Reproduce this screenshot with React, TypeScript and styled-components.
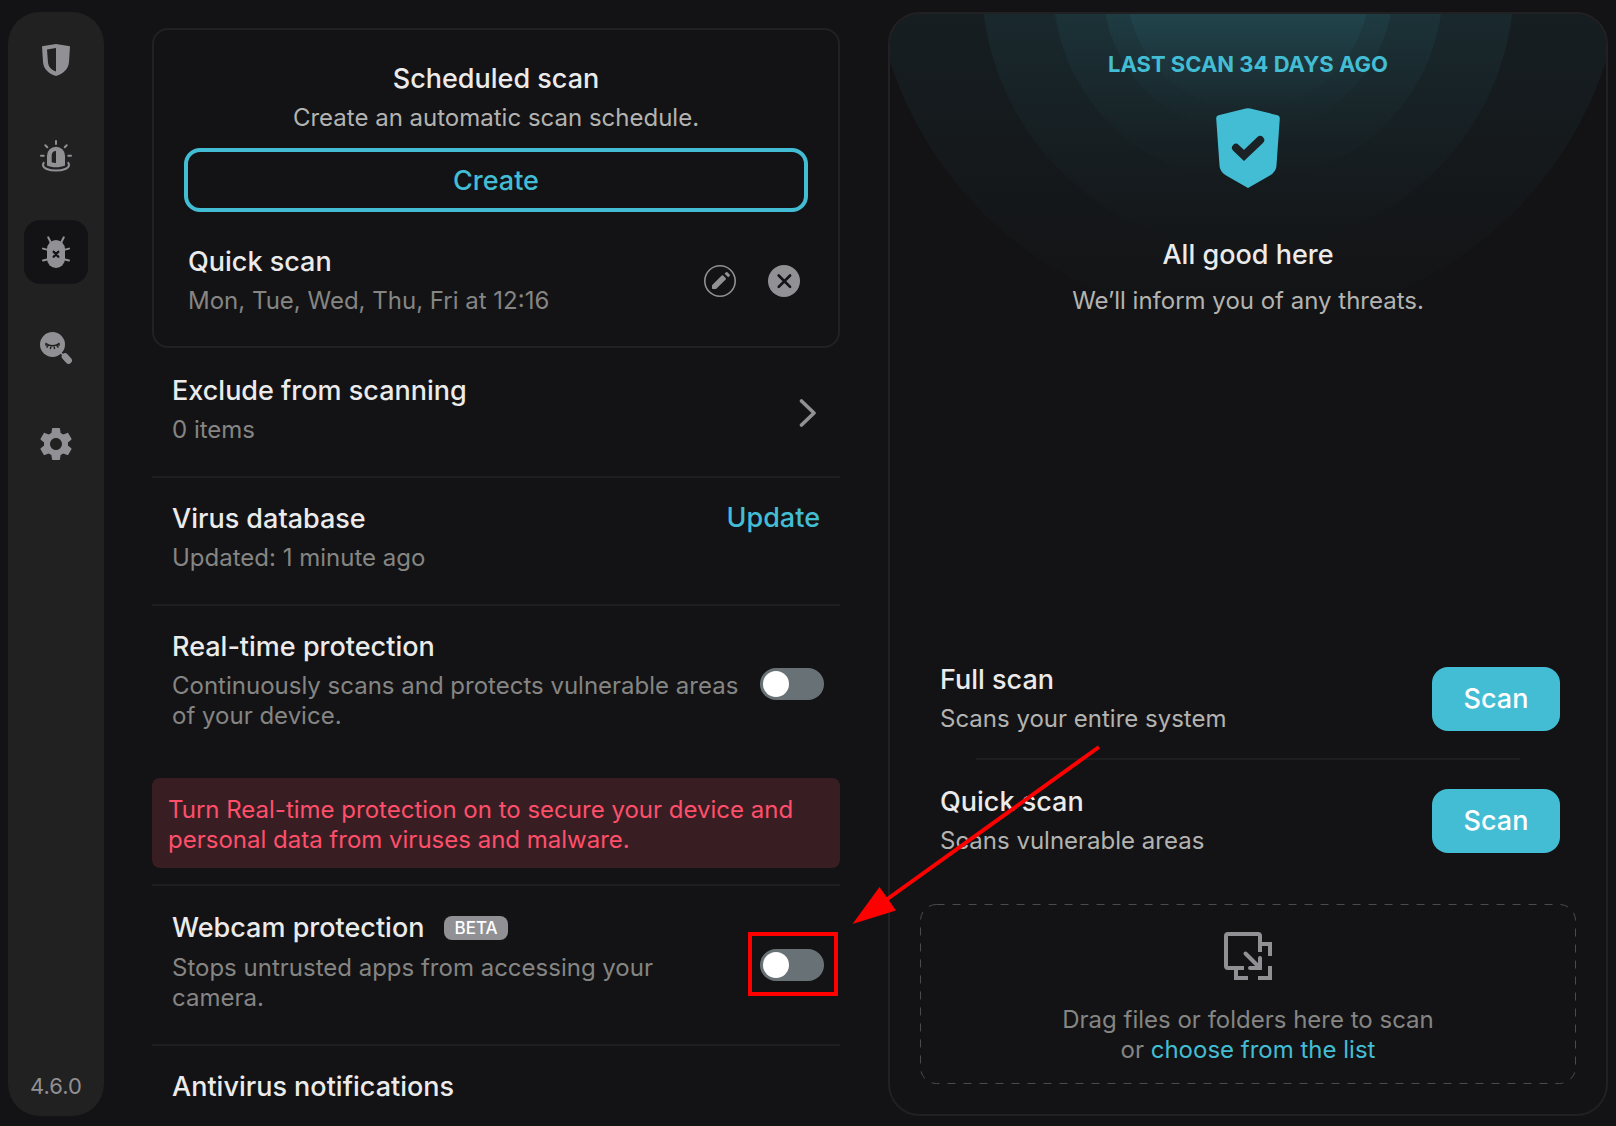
import React from 'react';
import styled, { createGlobalStyle } from 'styled-components';

const color = {
  page: '#131315',
  rail: '#212121',
  line: '#1e1e20',
  frame: '#212123',
  accent: '#43bdd4',
  text: '#ebebeb',
  soft: '#b3b3b1',
  muted: '#858583',
  icon: '#919095',
  danger: '#ff4f6b',
};

const GlobalStyle = createGlobalStyle`
  *, *::before, *::after { box-sizing: border-box; }
  body {
    margin: 0;
    background: ${color.page};
    color: ${color.text};
    font-family: Inter, "Liberation Sans", sans-serif;
    -webkit-font-smoothing: antialiased;
  }
  h1, h2, h3, p { margin: 0; font-weight: 400; }
  button { font: inherit; color: inherit; background: none; border: 0; padding: 0; cursor: pointer; }
  a { text-decoration: none; }
  svg { display: block; }
`;

const Shell = styled.div`
  display: grid;
  grid-template-columns: 96px minmax(0, 688fr) minmax(0, 720fr);
  gap: 48px;
  height: 100vh;
  min-height: 900px;
  padding: 12px 8px 10px;
  overflow: hidden;
`;

const Rail = styled.nav`
  display: flex;
  flex-direction: column;
  align-items: center;
  gap: 32px;
  padding: 16px;
  border-radius: 32px;
  background: ${color.rail};
`;

const RailButton = styled.button<{ $active?: boolean }>`
  display: grid;
  place-items: center;
  width: 64px;
  height: 64px;
  border-radius: 16px;
  color: ${color.icon};
  background: ${(p) => (p.$active ? color.page : 'transparent')};
`;

const Version = styled.span`
  margin-top: auto;
  color: ${color.icon};
  font-size: 22px;
  line-height: 28px;
`;

const Settings = styled.main`
  min-height: 0;
  padding-top: 16px;
`;

const Title = styled.h2`
  font-size: 27px;
  font-weight: 500;
  line-height: 34px;
`;

const Text = styled.p<{ $soft?: boolean }>`
  color: ${(p) => (p.$soft ? color.soft : color.muted)};
  font-size: 24px;
  line-height: 30px;
`;

const Stack = styled.div<{ $center?: boolean }>`
  display: flex;
  flex: 1;
  flex-direction: column;
  gap: 7px;
  min-width: 0;
  text-align: ${(p) => (p.$center ? 'center' : 'left')};
`;

const ScheduleCard = styled.section`
  padding: 32px 30px 30px;
  border: 2px solid ${color.frame};
  border-radius: 16px;
`;

const OutlineButton = styled.button`
  width: 100%;
  height: 64px;
  margin: 15px 0 33px;
  border: 4px solid ${color.accent};
  border-radius: 16px;
  color: ${color.accent};
  font-size: 27px;
  font-weight: 500;
`;

const ScheduleItem = styled.div`
  display: flex;
  align-items: center;
  gap: 32px;
  padding: 0 8px 0 4px;
`;

const IconButton = styled.button`
  display: block;
  color: ${color.icon};
`;

const Row = styled.section<{ $first?: boolean; $end?: number }>`
  display: flex;
  align-items: center;
  gap: 16px;
  padding: 0 ${(p) => p.$end ?? 16}px 0 20px;
  border-top: 2px solid ${(p) => (p.$first ? 'transparent' : color.line)};
`;

const RowText = styled(Stack)`
  padding: 24px 0 31px;
`;

const TitleLine = styled.div`
  display: flex;
  align-items: center;
  gap: 20px;
  min-height: 36px;
`;

const Badge = styled.span`
  padding: 0 10px;
  border-radius: 8px;
  background: ${color.icon};
  color: #fff;
  font-size: 17px;
  font-weight: 500;
  line-height: 24px;
`;

const TextButton = styled.button`
  align-self: flex-start;
  margin-top: 23px;
  color: ${color.accent};
  font-size: 27px;
  font-weight: 500;
  line-height: 34px;
`;

const Alert = styled.p`
  margin: 16px 0;
  padding: 17px 16px 13px;
  border-radius: 8px;
  background: #381e23;
  color: ${color.danger};
  font-size: 24px;
  line-height: 30px;
`;

const ToggleBox = styled.span`
  position: relative;
  flex: none;
  width: 64px;
  height: 32px;
`;

const Toggle = styled.input`
  appearance: none;
  display: block;
  width: 64px;
  height: 32px;
  margin: 0;
  padding: 3px;
  border-radius: 16px;
  background: #687276;
  cursor: pointer;

  &::before {
    content: '';
    display: block;
    width: 26px;
    height: 26px;
    border-radius: 50%;
    background: #fff;
  }

  &:checked {
    background: ${color.accent};
  }

  &:checked::before {
    margin-left: auto;
  }
`;

const Highlight = styled.span`
  position: absolute;
  top: -17px;
  left: -12px;
  width: 90px;
  height: 64px;
  border: 4px solid #f00;
  pointer-events: none;
`;

const Arrow = styled.svg`
  position: absolute;
  top: -209px;
  left: 88px;
  z-index: 2;
  pointer-events: none;
`;

const Panel = styled.aside`
  position: relative;
  display: flex;
  flex-direction: column;
  padding: 0 30px 30px;
  border: 2px solid ${color.frame};
  border-radius: 32px;
  overflow: hidden;
`;

const Glow = styled.svg`
  position: absolute;
  top: 0;
  left: 50%;
  z-index: -1;
  margin-left: -400px;
`;

const Status = styled.header`
  display: flex;
  flex-direction: column;
  align-items: center;
  padding-top: 36px;
  text-align: center;
`;

const StatusLabel = styled.p`
  margin-bottom: 30px;
  color: ${color.accent};
  font-size: 22px;
  line-height: 28px;
  && { font-weight: 700; }
`;

const StatusTitle = styled(Title)`
  margin: 50px 0 14px;
`;

const Scans = styled.div`
  margin: auto 16px 0 20px;
`;

const ScanRow = styled.section`
  display: flex;
  align-items: center;
`;

const ScanDivider = styled.hr`
  height: 2px;
  margin: 24px 40px 25px 36px;
  border: 0;
  background: ${color.line};
`;

const ScanButton = styled.button`
  width: 128px;
  height: 64px;
  border-radius: 16px;
  background: ${color.accent};
  color: #fff;
  font-size: 27px;
  font-weight: 500;
`;

const DropZone = styled.section`
  position: relative;
  display: flex;
  flex-direction: column;
  align-items: center;
  gap: 25px;
  margin-top: 48px;
  padding: 28px 16px 19px;
  text-align: center;
`;

const DropOutline = styled.svg`
  position: absolute;
  top: 0;
  left: 0;
  width: calc(100% - 1px);
  height: calc(100% - 1px);
  overflow: visible;
  pointer-events: none;
`;

const Link = styled.a`
  color: ${color.accent};
`;

const ShieldIcon = () => (
  <svg width="32" height="32" viewBox="0 0 32 32" fill="currentColor" fillRule="evenodd" aria-hidden="true">
    <path d="M16 0 30 2.3 29 18C28.4 25 24 29.300 16 32 8 29.300 3.600 25 3 18L2 2.300ZM16 4 7 5.500 8 18.500C8.500 23 11 25.700 16 27.500Z" />
  </svg>
);

const SirenIcon = () => (
  <svg width="32" height="32" viewBox="0 0 32 32" fill="none" stroke="currentColor" strokeWidth="2" strokeLinecap="round" aria-hidden="true">
    <path d="M16 1v3M5.300 5.300l2 2M26.700 5.300l-2 2M1 15.800h2.700M31 15.800h-2.700" />
    <path d="M3.700 22.800C3.200 23.500 3 24.200 3 25c0 3.200 5.800 5.600 13 5.600S29 28.200 29 25c0-.8-.2-1.500-.7-2.200" />
    <path d="M7 15.700a9 9 0 0 1 18 0V25.500c-5 2.400-13 2.400-18 0ZM16 11c-2.800 0-4.300 2-4.300 4.600V22.200c1.200.5 2.600.8 4.300.8Z" fill="currentColor" fillRule="evenodd" stroke="none" />
  </svg>
);

const BugIcon = () => (
  <svg width="32" height="32" viewBox="0 0 32 32" fill="none" stroke="currentColor" strokeWidth="2" strokeLinecap="round" aria-hidden="true">
    <rect x="7" y="4" width="18" height="28" rx="9" fill="currentColor" stroke="none" />
    <path d="M8.200 1.300 10.800 6.500M23.800 1.300 21.200 6.500M3 12.600l5 1.300M29 12.600l-5 1.300M3 24.500l5-1.300M29 24.500l-5-1.300" />
    <path d="m13.700 15.800 4.600 4.900M18.300 15.800l-4.600 4.900" stroke={color.page} strokeWidth="2.400" />
  </svg>
);

const InspectIcon = () => (
  <svg width="32" height="32" viewBox="0 0 32 32" fill="none" stroke="currentColor" strokeLinecap="round" aria-hidden="true">
    <circle cx="12.500" cy="12.500" r="12.500" fill="currentColor" stroke="none" />
    <path d="m20 20 4 4" strokeWidth="1.600" />
    <path d="M25 24.500 28.600 28.500" strokeWidth="6.600" />
    <path d="M6 11.500c3.500 3 9.500 3 13 0M8.300 13 7 15.200M11 13.900l-.5 2.500M14 13.900l.5 2.500M16.700 13l1.300 2.200M6 11.500v1.700M19 11.500v1.700" stroke={color.rail} strokeWidth="1.500" />
  </svg>
);

const GearIcon = () => (
  <svg width="32" height="32" viewBox="2.4 2.4 19.2 19.2" fill="currentColor" aria-hidden="true">
    <path d="M19.14 12.94c.04-.3.06-.61.06-.94 0-.32-.02-.64-.07-.94l2.030-1.580c.18-.14.23-.41.12-.61l-1.920-3.320c-.12-.22-.37-.29-.59-.22l-2.390.96c-.5-.38-1.030-.7-1.620-.94L14.400 2.810c-.04-.24-.24-.41-.48-.41h-3.840c-.24 0-.43.17-.47.41L9.250 5.350C8.660 5.590 8.120 5.920 7.630 6.290L5.240 5.330c-.22-.08-.47 0-.59.22L2.740 8.870c-.12.21-.08.47.12.61l2.030 1.580C4.840 11.360 4.800 11.690 4.800 12s.02.64.07.94l-2.030 1.580c-.18.14-.23.41-.12.61l1.920 3.320c.12.22.37.29.59.22l2.390-.96c.5.38 1.030.7 1.620.94l.36 2.540c.05.24.24.41.48.41h3.840c.24 0 .44-.17.47-.41l.36-2.540c.59-.24 1.130-.56 1.620-.94l2.390.96c.22.08.47 0 .59-.22l1.920-3.320c.12-.22.07-.47-.12-.61ZM12 15.600c-1.980 0-3.600-1.620-3.600-3.600s1.620-3.600 3.600-3.600 3.600 1.620 3.600 3.600-1.620 3.600-3.600 3.600Z" />
  </svg>
);

const EditIcon = () => (
  <svg width="32" height="32" viewBox="0 0 32 32" fill="currentColor" aria-hidden="true">
    <circle cx="16" cy="16" r="15.200" fill="none" stroke="currentColor" strokeWidth="1.600" />
    <path d="M8 20.300 17.700 10.600Q18.400 10 19.100 10.600L21.700 13.100Q22.300 13.800 21.700 14.500L12 24H8.700Q8 24 8 23.300ZM20.500 8.800 22 7.300Q22.700 6.800 23.400 7.300L25.700 9.600Q26.200 10.300 25.700 11L24.200 12.300Z" />
  </svg>
);

const RemoveIcon = () => (
  <svg width="32" height="32" viewBox="0 0 32 32" aria-hidden="true">
    <circle cx="16" cy="16" r="16" fill="currentColor" />
    <path d="m10.700 10.500 11.400 11.400M22.100 10.500 10.700 21.900" stroke={color.page} strokeWidth="2.600" strokeLinecap="round" />
  </svg>
);

const ChevronIcon = () => (
  <svg width="17" height="28" viewBox="0 0 17 28" fill="none" stroke="currentColor" strokeWidth="3.600" strokeLinecap="round" strokeLinejoin="round" aria-hidden="true">
    <path d="M2.500 2 15 14 2.500 26" />
  </svg>
);

const StatusShield = () => (
  <svg width="64" height="80" viewBox="0 0 64 80" aria-hidden="true">
    <path d="M29.800.6Q32-.2 34.200.6L61.500 7.200Q64 8 63.800 10.500L60.400 58.500Q59.600 64.500 53 68L32 80 11 68Q4.400 64.500 3.600 58.500L.2 10.500Q0 8 2.500 7.200Z" fill={color.accent} />
    <path d="M20 39.800 28 47.500 44.200 32" fill="none" stroke="#1a2226" strokeWidth="8" strokeLinecap="round" />
  </svg>
);

const DropIcon = () => (
  <svg width="48" height="48" viewBox="0 0 48 48" fill="none" stroke={color.icon} strokeWidth="4" aria-hidden="true">
    <path d="M20 36H4Q2 36 2 34V4Q2 2 4 2H34Q36 2 36 4V20" />
    <path d="M38 12h8v12M46 34v12H34M12 38v8h12" />
    <path d="M21.500 21.500 36 36M26 36h10V26" strokeLinecap="round" />
  </svg>
);

const rings = [
  { cy: -68, r: 376 },
  { cy: -32, r: 266 },
  { cy: -28, r: 195 },
  { cy: -26, r: 145 },
  { cy: -26, r: 121 },
];

const RingGlow = () => (
  <Glow width="800" height="340" viewBox="0 0 800 340" aria-hidden="true">
    <defs>
      {rings.map(({ cy, r }) => (
        <linearGradient key={r} id={`ring-${r}`} gradientUnits="userSpaceOnUse" x1="0" y1="0" x2="0" y2={cy + r}>
          <stop offset="0" stopColor={color.accent} stopOpacity="0.065" />
          <stop offset="1" stopColor={color.accent} stopOpacity="0" />
        </linearGradient>
      ))}
    </defs>
    {rings.map(({ cy, r }) => (
      <circle key={r} cx="400" cy={cy} r={r} fill={`url(#ring-${r})`} />
    ))}
  </Glow>
);

const navItems = [
  { label: 'Protection', Icon: ShieldIcon },
  { label: 'Alerts', Icon: SirenIcon },
  { label: 'Antivirus', Icon: BugIcon, active: true },
  { label: 'Privacy', Icon: InspectIcon },
  { label: 'Settings', Icon: GearIcon },
];

const scans = [
  { name: 'Full scan', detail: 'Scans your entire system' },
  { name: 'Quick scan', detail: 'Scans vulnerable areas' },
];

export default function App() {
  return (
    <>
      <GlobalStyle />
      <Shell>
        <Rail aria-label="Main">
          {navItems.map(({ label, Icon, active }) => (
            <RailButton key={label} aria-label={label} $active={active}>
              <Icon />
            </RailButton>
          ))}
          <Version>4.6.0</Version>
        </Rail>

        <Settings>
          <ScheduleCard>
            <Stack $center>
              <Title>Scheduled scan</Title>
              <Text $soft>Create an automatic scan schedule.</Text>
            </Stack>
            <OutlineButton>Create</OutlineButton>
            <ScheduleItem>
              <Stack>
                <Title as="h3">Quick scan</Title>
                <Text>Mon, Tue, Wed, Thu, Fri at 12:16</Text>
              </Stack>
              <IconButton aria-label="Edit schedule"><EditIcon /></IconButton>
              <IconButton aria-label="Remove schedule"><RemoveIcon /></IconButton>
            </ScheduleItem>
          </ScheduleCard>

          <Row $first $end={24}>
            <RowText>
              <Title>Exclude from scanning</Title>
              <Text>0 items</Text>
            </RowText>
            <IconButton aria-label="Open exclusions"><ChevronIcon /></IconButton>
          </Row>

          <Row $end={20}>
            <RowText>
              <Title>Virus database</Title>
              <Text>Updated: 1 minute ago</Text>
            </RowText>
            <TextButton>Update</TextButton>
          </Row>

          <Row>
            <RowText>
              <Title><label htmlFor="realtime">Real-time protection</label></Title>
              <Text>Continuously scans and protects vulnerable areas of your device.</Text>
            </RowText>
            <ToggleBox>
              <Toggle id="realtime" type="checkbox" role="switch" />
            </ToggleBox>
          </Row>

          <Alert role="alert">
            Turn Real-time protection on to secure your device and personal data from viruses and malware.
          </Alert>

          <Row>
            <RowText>
              <TitleLine>
                <Title><label htmlFor="webcam">Webcam protection</label></Title>
                <Badge>BETA</Badge>
              </TitleLine>
              <Text>Stops untrusted apps from accessing your camera.</Text>
            </RowText>
            <ToggleBox>
              <Toggle id="webcam" type="checkbox" role="switch" />
              <Highlight />
              <Arrow width="256" height="190" viewBox="0 0 256 190" aria-hidden="true">
                <path d="M251 7 38 160" stroke="#f00" strokeWidth="4" />
                <path d="M4.500 184 31.500 147 48 170.500Z" fill="#f00" />
              </Arrow>
            </ToggleBox>
          </Row>

          <Row>
            <RowText>
              <Title>Antivirus notifications</Title>
            </RowText>
          </Row>
        </Settings>

        <Panel>
          <RingGlow />
          <Status>
            <StatusLabel>LAST SCAN 34 DAYS AGO</StatusLabel>
            <StatusShield />
            <StatusTitle as="h1">All good here</StatusTitle>
            <Text $soft>We’ll inform you of any threats.</Text>
          </Status>

          <Scans>
            {scans.map(({ name, detail }, index) => (
              <React.Fragment key={name}>
                {index > 0 && <ScanDivider />}
                <ScanRow>
                  <Stack>
                    <Title>{name}</Title>
                    <Text $soft>{detail}</Text>
                  </Stack>
                  <ScanButton aria-label={`Scan: ${name}`}>Scan</ScanButton>
                </ScanRow>
              </React.Fragment>
            ))}
          </Scans>

          <DropZone>
            <DropOutline aria-hidden="true">
              <rect x="0.5" y="0.5" width="100%" height="100%" rx="16" fill="none" stroke="#4b4b4d" strokeDasharray="8 8" />
            </DropOutline>
            <DropIcon />
            <Text>
              Drag files or folders here to scan
              <br />
              or <Link href="#files">choose from the list</Link>
            </Text>
          </DropZone>
        </Panel>
      </Shell>
    </>
  );
}
